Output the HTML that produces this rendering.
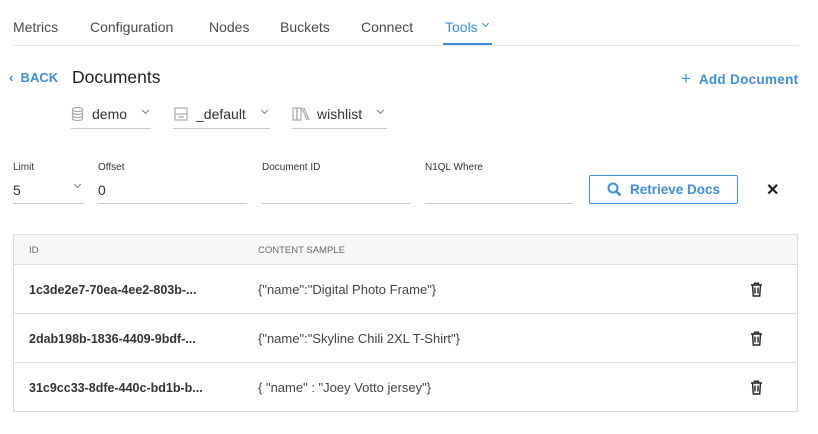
<!DOCTYPE html>
<html><head><meta charset="utf-8"><style>
*{margin:0;padding:0;box-sizing:border-box}
body{width:818px;height:434px;background:#fff;font-family:"Liberation Sans",sans-serif;color:#333;position:relative;overflow:hidden}
.a{position:absolute;white-space:nowrap}
.nav{font-size:14px;color:#4a4a4a;top:19px}
.blue{color:#3d8fe0}
.line{position:absolute;height:1px;background:#c8c8c8}
.lbl{font-size:10px;color:#333;top:162px}
.sel{font-size:14px;color:#333;top:106px}
.chev{position:absolute;width:5px;height:5px;border-right:1px solid #777;border-bottom:1px solid #777;transform:rotate(45deg)}
.row{position:absolute;left:13px;width:785px;border:1px solid #ddd;border-top:none}
.id{font-size:12.5px;font-weight:bold;color:#333}
.cs{font-size:13px;color:#444}
</style></head><body>
<div class="a nav" style="left:13px">Metrics</div>
<div class="a nav" style="left:90px">Configuration</div>
<div class="a nav" style="left:209px">Nodes</div>
<div class="a nav" style="left:280px">Buckets</div>
<div class="a nav" style="left:361px">Connect</div>
<div class="a nav blue" style="left:445px">Tools</div>
<div class="chev" style="left:483px;top:21px;border-color:#3d8fe0;border-width:1.5px"></div>
<div class="line" style="left:13px;top:45px;width:785px;background:#e2e2e2"></div>
<div class="line" style="left:443px;top:43px;width:49px;height:2px;background:#3d8fe0"></div>

<div class="a blue" style="left:9px;top:70px;font-size:13px;font-weight:bold">&#8249;&nbsp; BACK</div>
<div class="a" style="left:72px;top:67px;font-size:17.5px;color:#222">Documents</div>
<div class="a blue" style="left:681px;top:69px;font-size:13.5px;font-weight:bold;letter-spacing:0.3px"><span style="font-size:17px;font-weight:normal">+</span>&nbsp; Add Document</div>

<svg class="a" style="left:71px;top:107px" width="13" height="14" viewBox="0 0 13 14"><g fill="none" stroke="#aaa" stroke-width="1.2"><ellipse cx="6.5" cy="2.5" rx="5" ry="2"/><path d="M1.5 2.5v9c0 1.1 2.2 2 5 2s5-.9 5-2v-9M1.5 5.5c0 1.1 2.2 2 5 2s5-.9 5-2M1.5 8.5c0 1.1 2.2 2 5 2s5-.9 5-2"/></g></svg>
<div class="a sel" style="left:92px">demo</div>
<div class="chev" style="left:143px;top:108px"></div>
<div class="line" style="left:71px;top:128px;width:80px"></div>
<svg class="a" style="left:174px;top:107px" width="14" height="14" viewBox="0 0 14 14"><g fill="none" stroke="#aaa" stroke-width="1.2"><rect x="1" y="1" width="12" height="12"/><path d="M1 7h12M4 10h6"/></g></svg>
<div class="a sel" style="left:196px">_default</div>
<div class="chev" style="left:262px;top:108px"></div>
<div class="line" style="left:173px;top:128px;width:97px"></div>
<svg class="a" style="left:292px;top:107px" width="18" height="14" viewBox="0 0 18 14"><g fill="none" stroke="#aaa" stroke-width="1.2"><rect x="1" y="1" width="4" height="12"/><rect x="5" y="1" width="4" height="12"/><path d="M10 1l5 12M12 1l5 12"/></g></svg>
<div class="a sel" style="left:317px">wishlist</div>
<div class="chev" style="left:378px;top:108px"></div>
<div class="line" style="left:292px;top:128px;width:95px"></div>

<div class="a lbl" style="left:13px">Limit</div>
<div class="a lbl" style="left:98px">Offset</div>
<div class="a lbl" style="left:262px">Document ID</div>
<div class="a lbl" style="left:425px">N1QL Where</div>
<div class="a" style="left:13px;top:182px;font-size:14px">5</div>
<div class="chev" style="left:75px;top:182px"></div>
<div class="line" style="left:13px;top:203px;width:71px"></div>
<div class="a" style="left:98px;top:182px;font-size:14px">0</div>
<div class="line" style="left:98px;top:203px;width:149px"></div>
<div class="line" style="left:262px;top:203px;width:148px"></div>
<div class="line" style="left:425px;top:203px;width:148px"></div>
<div class="a" style="left:589px;top:175px;width:149px;height:29px;border:1.5px solid #3d8fe0;border-radius:2px"></div>
<svg class="a" style="left:607px;top:182px" width="15" height="15" viewBox="0 0 15 15"><circle cx="6" cy="6" r="4.5" fill="none" stroke="#3d8fe0" stroke-width="2"/><path d="M9.5 9.5l4 4" stroke="#3d8fe0" stroke-width="2.4"/></svg>
<div class="a blue" style="left:630px;top:182px;font-size:13.5px;font-weight:bold">Retrieve Docs</div>
<div class="a" style="left:766px;top:180px;font-size:16px;font-weight:bold;color:#222">&#10005;</div>

<div class="a" style="left:13px;top:234px;width:785px;height:31px;background:#f7f7f7;border:1px solid #ddd"></div>
<div class="a" style="left:29px;top:245px;font-size:9.5px;color:#666">ID</div>
<div class="a" style="left:258px;top:245px;font-size:9.5px;color:#666">CONTENT SAMPLE</div>

<div class="row" style="top:265px;height:49px"></div>
<div class="row" style="top:314px;height:49px"></div>
<div class="row" style="top:363px;height:49px"></div>
<div class="a id" style="left:29px;top:283px">1c3de2e7-70ea-4ee2-803b-...</div>
<div class="a cs" style="left:258px;top:282px">{"name":"Digital Photo Frame"}</div>
<div class="a id" style="left:29px;top:332px">2dab198b-1836-4409-9bdf-...</div>
<div class="a cs" style="left:258px;top:331px">{"name":"Skyline Chili 2XL T-Shirt"}</div>
<div class="a id" style="left:29px;top:381px">31c9cc33-8dfe-440c-bd1b-b...</div>
<div class="a cs" style="left:258px;top:380px">{ "name" : "Joey Votto jersey"}</div>
<svg class="a" style="left:750px;top:282px" width="13" height="15" viewBox="0 0 13 15"><g fill="none" stroke="#222" stroke-width="1.4"><path d="M1 3h11M4.5 3V1.2h4V3M2.5 3l.8 11h6.4l.8-11M5 5.5v6M8 5.5v6"/></g></svg>
<svg class="a" style="left:750px;top:331px" width="13" height="15" viewBox="0 0 13 15"><g fill="none" stroke="#222" stroke-width="1.4"><path d="M1 3h11M4.5 3V1.2h4V3M2.5 3l.8 11h6.4l.8-11M5 5.5v6M8 5.5v6"/></g></svg>
<svg class="a" style="left:750px;top:380px" width="13" height="15" viewBox="0 0 13 15"><g fill="none" stroke="#222" stroke-width="1.4"><path d="M1 3h11M4.5 3V1.2h4V3M2.5 3l.8 11h6.4l.8-11M5 5.5v6M8 5.5v6"/></g></svg>
</body></html>
